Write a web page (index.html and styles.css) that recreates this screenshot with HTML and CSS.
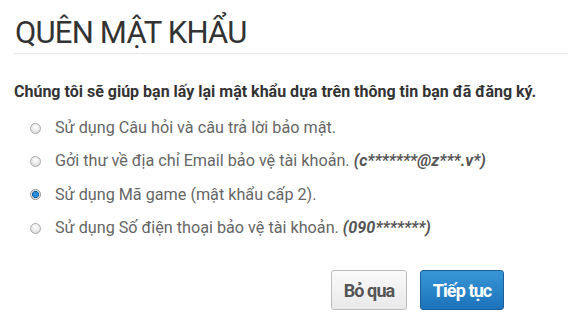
FILE: index.html
```html
<!DOCTYPE html>
<html lang="vi">
<head>
<meta charset="utf-8">
<link rel="stylesheet" href="styles.css">
</head>
<body>
<div class="page">
  <h1 class="title">QUÊN MẬT KHẨU</h1>
  <p class="lead">Chúng tôi sẽ giúp bạn lấy lại mật khẩu dựa trên thông tin bạn đã đăng ký.</p>
  <ul class="options">
    <li class="option"><span class="radio"></span><span>Sử dụng Câu hỏi và câu trả lời bảo mật.</span></li>
    <li class="option"><span class="radio"></span><span>Gởi thư về địa chỉ Email bảo vệ tài khoản. <b class="hint">(c*******@z***.v*)</b></span></li>
    <li class="option"><span class="radio checked"></span><span>Sử dụng Mã game (mật khẩu cấp 2).</span></li>
    <li class="option"><span class="radio"></span><span>Sử dụng Số điện thoại bảo vệ tài khoản. <b class="hint">(090*******)</b></span></li>
  </ul>
  <div class="actions">
    <button class="btn btn-default">Bỏ qua</button>
    <button class="btn btn-primary">Tiếp tục</button>
  </div>
</div>
</body>
</html>
```
FILE: styles.css
```css
html, body { margin: 0; padding: 0; background: #fff; }
.page { padding: 0 1px 0 14px; font-family: Roboto, "Liberation Sans", sans-serif; }
.title {
  margin: 0;
  padding: 13px 0 0 1px;
  height: 40px;
  font-family: Roboto, "Liberation Sans", sans-serif;
  font-weight: 400;
  font-size: 31px;
  letter-spacing: -0.8px;
  line-height: 40px;
  color: #333;
  border-bottom: 1px solid #e5e5e5;
}
.lead {
  margin: 28px 0 0 0;
  font-size: 16px;
  font-weight: 700;
  color: #333;
  line-height: 20px;
}
.options { list-style: none; margin: 9px 0 0 0; padding: 0 0 0 16px; }
.option {
  display: flex;
  align-items: center;
  gap: 14px;
  height: 33.3px;
  font-size: 16.2px;
  color: #666;
}
.hint { font-style: italic; color: #555; }
.radio {
  width: 11px; height: 11px;
  border-radius: 50%;
  border: 1px solid #aaa;
  background: radial-gradient(circle at 50% 35%, #fff 0%, #e6e6e6 60%, #cfcfcf 100%);
  box-sizing: border-box;
  flex: none;
  margin-top: 1px;
}
.radio.checked {
  border-color: #8a8f96;
  background: radial-gradient(circle, #2a8fd8 0 2.6px, #0a4f8e 3.2px, #e8e8e8 3.8px, #d4d4d4 100%);
}
.actions {
  display: flex;
  justify-content: flex-end;
  gap: 13px;
  margin-top: 26px;
  padding-right: 64px;
}
.btn {
  height: 40px;
  border-radius: 3px;
  font-family: Roboto, "Liberation Sans", sans-serif;
  font-weight: 700;
  font-size: 18px;
  letter-spacing: -0.9px;
  padding: 0;
  white-space: nowrap;
  cursor: pointer;
}
.btn-default {
  width: 76px;
  color: #555;
  border: 1px solid #bcbcbc;
  background: linear-gradient(#fafafa, #e9e9e9);
}
.btn-primary {
  width: 84px;
  color: #fff;
  border: 1px solid #1a5f9a;
  background: linear-gradient(#3896d6, #1b73bb);
}
```
